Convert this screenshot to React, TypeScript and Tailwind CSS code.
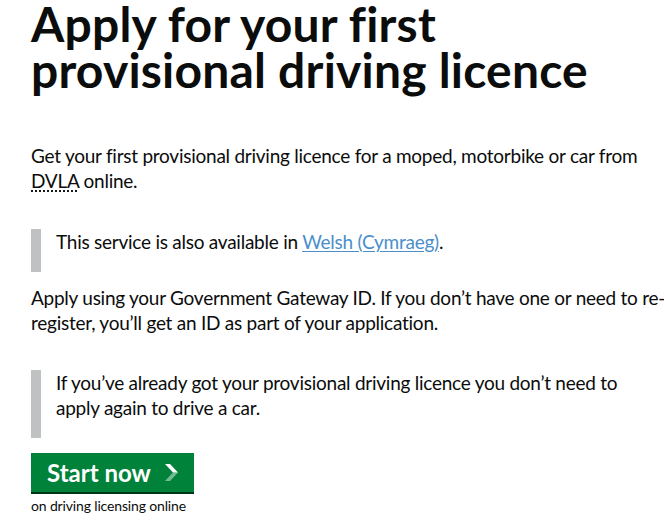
import React from 'react'

const Inset = ({ children }: { children: React.ReactNode }) => (
  <div className="border-l-[10px] border-[#bfc1c3] pl-[15px] pb-[18px]">
    <p>{children}</p>
  </div>
)

const Chevron = () => (
  <svg width="13" height="17" viewBox="0 0 13 17" className="ml-[14px]">
    <polygon points="0,0 5,0 13,8.5 8,8.5" fill="#ffffff" />
    <polygon points="8,8.5 13,8.5 5,17 0,17" fill="#ffffff" fillOpacity="0.45" />
  </svg>
)

const App = () => {
  return (
    <div className="w-[664px] h-[521px] bg-white overflow-hidden text-[#0b0c0c] font-['Lato',sans-serif] pl-[31px] pt-[1px]">
      <h1 className="text-[48px] leading-[46px] font-bold tracking-[0.2px]">
        Apply for your first
        <br />
        provisional driving licence
      </h1>

      <div className="text-[19px] leading-[25px] tracking-[-0.25px]">
        <p className="mt-[50px]">
          Get your first provisional driving licence for a moped, motorbike or car from{' '}
          <abbr title="Driver and Vehicle Licensing Agency" className="no-underline underline decoration-dotted underline-offset-[3px]">
            DVLA
          </abbr>{' '}
          online.
        </p>

        <div className="mt-[36px]">
          <Inset>
            This service is also available in{' '}
            <a href="#" className="text-[#4a8fcb] underline underline-offset-[2px]">
              Welsh (Cymraeg)
            </a>
            .
          </Inset>
        </div>

        <p className="mt-[13px] mr-[-6px]">
          Apply using your Government Gateway ID. If you don’t have one or need to re-register, you’ll get an ID as part of your application.
        </p>

        <div className="mt-[35px]">
          <Inset>
            If you’ve already got your provisional driving licence you don’t need to apply again to drive a car.
          </Inset>
        </div>
      </div>

      <div className="mt-[15px] flex flex-col items-start">
        <a
          href="#"
          className="flex items-center h-[39px] pl-[16px] pr-[16px] bg-[#00823b] text-white text-[24px] font-bold leading-none shadow-[0_2px_0_#003618]"
        >
          Start now
          <Chevron />
        </a>
        <p className="mt-[4px] text-[14px] leading-[20px] tracking-[-0.15px]">on driving licensing online</p>
      </div>
    </div>
  )
}

export default App
